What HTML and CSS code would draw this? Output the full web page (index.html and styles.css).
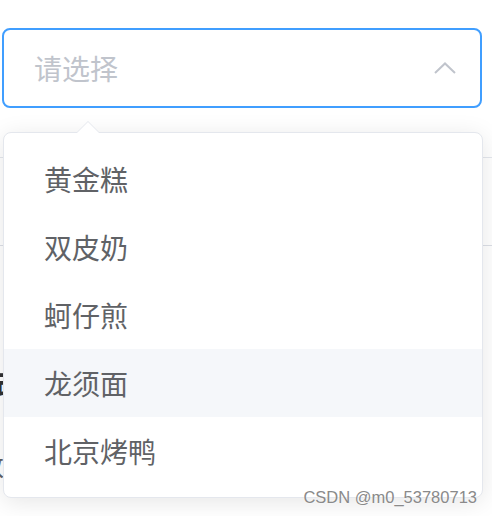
FILE: index.html
```
<!DOCTYPE html>
<html lang="zh-CN">
  <head>
    <meta charset="UTF-8">
    <meta name="viewport" content="width=device-width, initial-scale=1.0">
    <title>Select</title>
    <link rel="stylesheet" href="styles.css">
  </head>
  <body>
    <div class="page">
      <div class="select">
        <span class="placeholder">请选择</span>
        <svg class="arrow-icon" width="22" height="12" viewBox="0 0 22 12">
          <polyline points="1,11 11,1.5 21,11" fill="none" stroke="#c0c4cc" stroke-width="2"/>
        </svg>
      </div>

      <!-- the form that sits behind the open dropdown -->
      <div class="behind">
        <div class="line line-top"></div>
        <div class="line"></div>
        <p class="bg-title">方式</p>
        <p class="bg-sub">数</p>
      </div>

      <div class="dropdown">
        <span class="popper-arrow"></span>
        <ul class="options">
          <li class="option">黄金糕</li>
          <li class="option">双皮奶</li>
          <li class="option">蚵仔煎</li>
          <li class="option hover">龙须面</li>
          <li class="option">北京烤鸭</li>
        </ul>
      </div>

      <p class="watermark">CSDN @m0_53780713</p>
    </div>
  </body>
</html>
```

FILE: styles.css
```
body{
    margin: 0;
    background-color: white;
    font-family: "Noto Sans CJK SC", "Liberation Sans", sans-serif;
    overflow: hidden;
}

.page{
    position: relative;
    width: 492px;
    height: 516px;
    padding-top: 28px;
    box-sizing: border-box;
    overflow: hidden;
}

.select{
    box-sizing: border-box;
    width: 480px;
    height: 80px;
    margin-left: 2px;
    border: 2px solid #409eff;
    border-radius: 8px;
    padding: 0 24px 0 30px;
    display: flex;
    align-items: center;
    justify-content: space-between;
}

.placeholder{
    font-size: 28px;
    color: #c0c4cc;
}

.arrow-icon{
    display: block;
}

.behind{
    padding-top: 49px;
}

.line{
    height: 1px;
    background-color: #dcdfe6;
    margin-top: 87px;
}

.line-top{
    margin-top: 0;
    background-color: #e4e7ed;
}

.bg-title{
    margin: 112px 0 0 -42px;
    font-size: 32px;
    line-height: 46px;
    font-weight: bold;
    color: #303133;
}

.bg-sub{
    margin: 42px 0 0 -22px;
    font-size: 26px;
    line-height: 38px;
    color: #606266;
}

.dropdown{
    position: absolute;
    left: 3px;
    top: 132px;
    box-sizing: border-box;
    width: 480px;
    background-color: white;
    border: 1px solid #e4e7ed;
    border-radius: 8px;
    box-shadow: 0 4px 24px rgba(0, 0, 0, 0.1);
}

.popper-arrow{
    position: absolute;
    top: -12px;
    left: 72px;
    width: 0;
    height: 0;
    border-left: 12px solid transparent;
    border-right: 12px solid transparent;
    border-bottom: 12px solid #e4e7ed;
}

.popper-arrow::after{
    content: "";
    position: absolute;
    top: 1px;
    left: -11px;
    border-left: 11px solid transparent;
    border-right: 11px solid transparent;
    border-bottom: 11px solid white;
}

.options{
    list-style: none;
    margin: 0;
    padding: 12px 0;
}

.option{
    height: 68px;
    line-height: 68px;
    padding: 0 40px;
    font-size: 28px;
    color: #606266;
}

.hover{
    background-color: #f5f7fa;
}

.watermark{
    position: absolute;
    right: 15px;
    top: 487px;
    margin: 0;
    font-family: "Liberation Sans", Arial, sans-serif;
    font-size: 16.5px;
    line-height: 20px;
    color: #8a8a8a;
    text-shadow: 0 0 2px white;
}
```
